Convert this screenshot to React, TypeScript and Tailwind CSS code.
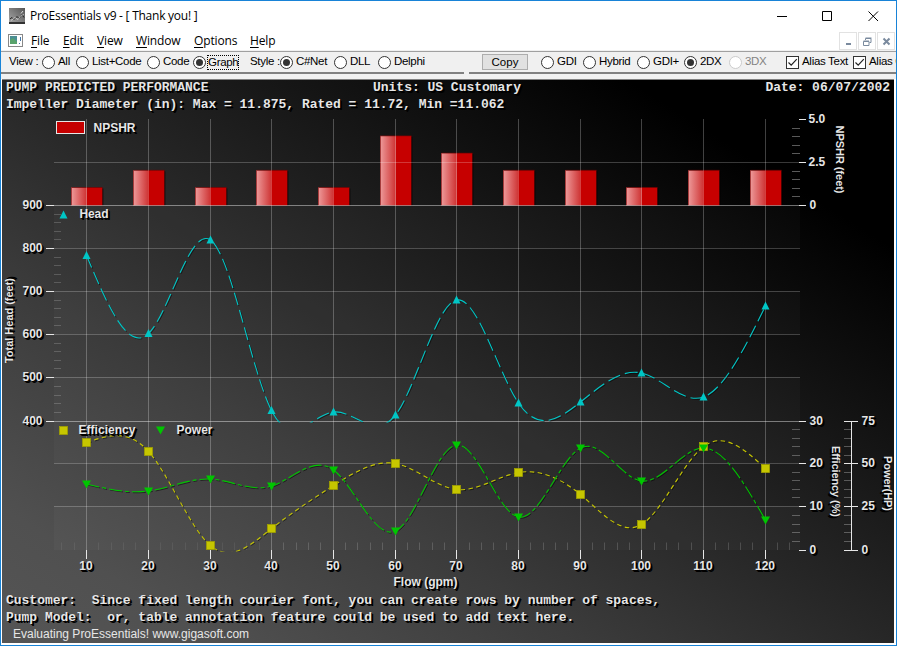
import { useState } from "react";

const columns = [86.5, 148.5, 210.5, 271.5, 333.5, 395.5, 456.5, 518.5, 580.5, 641.5, 703.5, 765.5];
const rows = [162.5, 205.5, 248.5, 291.5, 334.5, 377.5, 421.5, 463.5, 506.5];

const npshr = [1, 2, 1, 2, 1, 4, 3, 2, 2, 1, 2, 2];
const head = [255.5, 333.5, 240, 410.5, 412, 415, 300, 403, 402, 373, 397, 306];
const efficiency = [442.5, 451.5, 545.5, 528.5, 485.5, 463.5, 489.5, 472.5, 494.5, 524.5, 446.5, 468.5];
const power = [484, 491, 479, 486, 470, 531, 445, 517, 448, 481, 448, 520];

// Natural cubic spline through evenly spaced points, returned as bezier segments
function spline(ys: number[]) {
  const n = ys.length;
  const c = new Array(n).fill(0);
  const d = new Array(n).fill(0);
  for (let i = 1; i < n - 1; i++) {
    const rhs = 6 * (ys[i + 1] - 2 * ys[i] + ys[i - 1]);
    const m = 4 - c[i - 1];
    c[i] = 1 / m;
    d[i] = (rhs - d[i - 1]) / m;
  }
  const s = new Array(n).fill(0);
  for (let i = n - 2; i > 0; i--) s[i] = d[i] - c[i] * s[i + 1];

  let path = `M${columns[0]} ${ys[0]}`;
  for (let i = 0; i < n - 1; i++) {
    const step = columns[i + 1] - columns[i];
    const delta = ys[i + 1] - ys[i];
    const start = delta - (2 * s[i] + s[i + 1]) / 6;
    const end = delta + (s[i] + 2 * s[i + 1]) / 6;
    path += ` C${columns[i] + step / 3} ${ys[i] + start / 3} ${columns[i + 1] - step / 3} ${ys[i + 1] - end / 3} ${columns[i + 1]} ${ys[i + 1]}`;
  }
  return path;
}

// Tick positions between major divisions, four per interval
function minors(majors: number[]) {
  return majors.slice(1).flatMap((y, i) =>
    [1, 2, 3, 4].map((k) => Math.round(majors[i] + ((y - majors[i]) * k) / 5 - 0.5) + 0.5)
  );
}

function Up({ x, y }: { x: number; y: number }) {
  return <path d={`M${x} ${y - 4.5}L${x + 4} ${y + 3.5}H${x - 4}Z`} fill="#00c6c6" />;
}

function Down({ x, y }: { x: number; y: number }) {
  return <path d={`M${x} ${y + 4.5}L${x + 4.5} ${y - 3.5}H${x - 4.5}Z`} fill="#00c600" />;
}

function Square({ x, y }: { x: number; y: number }) {
  return <rect x={x - 4} y={y - 4} width="8" height="8" fill="#c6c600" stroke="#a0a000" strokeWidth="0.8" />;
}

function Curve({ ys, color, dash, clip }: { ys: number[]; color: string; dash: string; clip: string }) {
  const d = spline(ys);
  return (
    <g clipPath={`url(#${clip})`} fill="none" strokeDasharray={dash}>
      <path d={d} stroke="#000" strokeOpacity="0.5" transform="translate(1 1)" />
      <path d={d} stroke={color} strokeWidth="1.1" />
    </g>
  );
}

function Chart() {
  const headAxis = rows.slice(1, 7);
  const lowerAxis = [421.5, 463.5, 506.5, 550.5];
  const upperAxis = [119.5, 162.5, 205.5];
  const xMinors = Array.from({ length: 61 }, (_, i) => i - 2).filter((i) => i % 5 !== 0 && i < 58);

  return (
    <svg
      viewBox="2 112 892 482"
      className="block h-[482px] w-[892px] shrink-0 font-['Liberation_Sans',sans-serif] text-[12px] font-bold [&_text]:[text-shadow:1px_1px_0_#000,2px_2px_0_#000]"
    >
      <defs>
        <linearGradient id="bar">
          <stop offset="0" stopColor="#ee9c9c" />
          <stop offset="0.5" stopColor="#ce3434" />
          <stop offset="0.5" stopColor="#c60000" />
        </linearGradient>
        <clipPath id="upper">
          <rect x="54" y="205" width="746" height="217.5" />
        </clipPath>
        <clipPath id="lower">
          <rect x="54" y="421" width="746" height="130.5" />
        </clipPath>
      </defs>

      {/* Alternating bands */}
      <g fill="#fff" fillOpacity="0.025">
        <rect x="54" y="205" width="746" height="43" />
        <rect x="54" y="291" width="746" height="43" />
        <rect x="54" y="377" width="746" height="86" />
        <rect x="54" y="506" width="746" height="44" />
      </g>

      {/* Bars */}
      {npshr.map((v, i) => {
        const h = v * 17.2 + 0.8;
        return (
          <g key={i}>
            <rect x={columns[i] - 14} y={206.5 - h} width="31" height={h - 1} fill="#000" fillOpacity="0.5" />
            <rect x={columns[i] - 15.5} y={205.5 - h} width="31" height={h} fill="url(#bar)" />
            <path d={`M${columns[i] - 15} ${205.5}v${-h}h31v${h}`} fill="none" stroke="#700" strokeOpacity="0.6" />
          </g>
        );
      })}

      {/* Grid */}
      <g stroke="#fff" strokeOpacity="0.25">
        {columns.map((x) => (
          <path key={x} d={`M${x} 119V550`} />
        ))}
        {rows.map((y) => (
          <path key={y} d={`M54 ${y}H800`} strokeOpacity={y === 205.5 || y === 421.5 ? 0.42 : 0.22} />
        ))}
      </g>

      {/* Minor ticks */}
      <g stroke="#fff" strokeOpacity="0.18">
        {minors(headAxis).map((y) => (
          <path key={y} d={`M54 ${y}h7`} />
        ))}
        {minors(upperAxis).map((y) => (
          <path key={y} d={`M792 ${y}h8`} strokeOpacity="0.35" />
        ))}
        {minors(lowerAxis).map((y) => (
          <path key={y} d={`M792 ${y}h8M844 ${y}h7`} strokeOpacity="0.28" />
        ))}
        {xMinors.map((i) => (
          <path key={i} d={`M${Math.round(86 + i * 12.34) + 0.5} 542.5V550`} strokeOpacity={i < 15 ? 0.07 : 0.16} />
        ))}
      </g>

      {/* Major ticks */}
      <g stroke="#e6e6e6">
        {headAxis.map((y) => (
          <path key={y} d={`M46 ${y}h8`} />
        ))}
        {[...upperAxis, ...lowerAxis].map((y, i) => (
          <path key={i} d={`M799 ${y}h7`} />
        ))}
        {lowerAxis.map((y) => (
          <path key={y} d={`M844 ${y}h14`} />
        ))}
        {columns.map((x) => (
          <path key={x} d={`M${x} 550v9`} />
        ))}
        <path d="M851.5 421V551" />
      </g>

      {/* Series */}
      <Curve ys={head} color="#00c6c6" dash="13 5" clip="upper" />
      <Curve ys={efficiency} color="#c6c600" dash="4.5 3.5" clip="lower" />
      <Curve ys={power} color="#00c600" dash="13 3 4 3" clip="lower" />
      {head.map((y, i) => (
        <Up key={i} x={columns[i]} y={y} />
      ))}
      {efficiency.map((y, i) => (
        <Square key={i} x={columns[i]} y={y} />
      ))}
      {power.map((y, i) => (
        <Down key={i} x={columns[i]} y={y} />
      ))}

      {/* Legends */}
      <rect x="56.5" y="121.5" width="28" height="12" fill="#c60000" stroke="#e6e6e6" />
      <Up x={63.5} y={215} />
      <Square x={63.5} y={430.5} />
      <Down x={160.5} y={430} />
      <g fill="#e6e6e6">
        <text x="93.5" y="132" textLength="42">NPSHR</text>
        <text x="79.5" y="218" textLength="29">Head</text>
        <text x="78.5" y="434" textLength="57">Efficiency</text>
        <text x="176.5" y="434" textLength="36">Power</text>

        <g textAnchor="end">
          {headAxis.map((y, i) => (
            <text key={y} x="42.5" y={y + 3.5}>{900 - i * 100}</text>
          ))}
        </g>
        <text x="808.5" y="123">5.0</text>
        <text x="808.5" y="166">2.5</text>
        <text x="809.5" y="209">0</text>
        {lowerAxis.map((y, i) => (
          <g key={y}>
            <text x="809.5" y={y + 3.5}>{30 - i * 10}</text>
            <text x="861.5" y={y + 3.5}>{75 - i * 25}</text>
          </g>
        ))}
        <g textAnchor="middle">
          {columns.map((x, i) => (
            <text key={x} x={x - 0.5} y="570">{(i + 1) * 10}</text>
          ))}
          <text x="425.5" y="585.5">Flow (gpm)</text>
        </g>
        <g textAnchor="middle" className="text-[11px]">
          <text transform="translate(13 320.5) rotate(-90)" textLength="85">Total Head (feet)</text>
          <text transform="translate(835.5 159.5) rotate(90)" textLength="68">NPSHR (feet)</text>
          <text transform="translate(831.5 481.5) rotate(90)" textLength="71">Efficiency (%)</text>
          <text transform="translate(883.5 483.5) rotate(90)" textLength="55">Power(HP)</text>
        </g>
      </g>
    </svg>
  );
}

type RadioProps = {
  label: string;
  checked: boolean;
  onSelect: () => void;
  width: string;
  disabled?: boolean;
  focused?: boolean;
};

function Radio({ label, checked, onSelect, width, disabled, focused }: RadioProps) {
  return (
    <button
      onClick={onSelect}
      disabled={disabled}
      className={`flex h-full shrink-0 items-center gap-[3px] whitespace-nowrap ${width} ${disabled ? "text-[#838383]" : "text-black"}`}
    >
      <span
        className={`flex size-[13px] shrink-0 items-center justify-center rounded-full border bg-white ${disabled ? "border-[#ccc]" : "border-[#333]"}`}
      >
        {checked && <span className="size-[7px] rounded-full bg-[#333]" />}
      </span>
      <span className={focused ? "-ml-px outline-1 outline-dotted outline-black leading-[13px]" : ""}>{label}</span>
    </button>
  );
}

function Check({ label, checked, onToggle }: { label: string; checked: boolean; onToggle: () => void }) {
  return (
    <button onClick={onToggle} className="flex h-full w-[63px] shrink-0 items-center gap-[3px] whitespace-nowrap">
      <span className="flex size-[13px] shrink-0 items-center justify-center border border-[#333] bg-white">
        {checked && (
          <svg viewBox="0 0 11 11" className="size-[11px]" fill="none" stroke="#222" strokeWidth="1.2">
            <path d="M1.5 5.5L4.2 8.2L9.8 2.2" />
          </svg>
        )}
      </span>
      {label}
    </button>
  );
}

export default function App() {
  const [view, setView] = useState("Graph");
  const [style, setStyle] = useState("C#Net");
  const [render, setRender] = useState("2DX");
  const [aliasText, setAliasText] = useState(true);
  const [aliasGraph, setAliasGraph] = useState(true);

  const views = [
    { label: "All", width: "w-[34px]" },
    { label: "List+Code", width: "w-[71px]" },
    { label: "Code", width: "w-[46px]" },
    { label: "Graph", width: "w-[57px]" },
  ];
  const styles = [
    { label: "C#Net", width: "w-[54px]" },
    { label: "DLL", width: "w-[44px]" },
    { label: "Delphi", width: "w-[104px]" },
  ];
  const renderers = [
    { label: "GDI", width: "w-[42px]" },
    { label: "Hybrid", width: "w-[54px]" },
    { label: "GDI+", width: "w-[47px]" },
    { label: "2DX", width: "w-[45px]" },
    { label: "3DX", width: "w-[57px]", disabled: true },
  ];
  const menus = [
    { label: "File", width: "w-[32px]" },
    { label: "Edit", width: "w-[34px]" },
    { label: "View", width: "w-[39px]" },
    { label: "Window", width: "w-[58px]" },
    { label: "Options", width: "w-[56px]" },
    { label: "Help", width: "w-[40px]" },
  ];

  return (
    <div className="flex h-[646px] w-[897px] flex-col overflow-hidden border border-[#1883d7] bg-white text-black">
      {/* Title bar */}
      <header className="flex h-[29px] shrink-0 items-center pl-[8px] font-['Open_Sans',sans-serif] text-[12px]">
        <svg viewBox="0 0 16 16" className="size-[16px]">
          <defs>
            <linearGradient id="app" x1="0" y1="1" x2="1" y2="0">
              <stop offset="0" stopColor="#aaa" />
              <stop offset="1" stopColor="#555" />
            </linearGradient>
          </defs>
          <rect width="16" height="16" fill="url(#app)" />
          <path d="M0 14h16v2H0z" fill="#333" />
          <path d="M1 11l2-1.5 2 2 3-3 2 2 3-4 2 3" fill="none" stroke="#222" />
          <path d="M2 12.5l4-3 3 2 3-4 3-1" fill="none" stroke="#ddd" strokeWidth="0.7" />
          <path d="M12 5.5l2-2.5" stroke="#ddd" />
        </svg>
        <h1 className="ml-[5px] w-[200px] whitespace-nowrap tracking-[-0.25px]">ProEssentials v9 - [ Thank you! ]</h1>
        <div className="ml-auto flex pr-[17px]">
          <svg viewBox="0 0 102 12" className="h-[12px] w-[102px]" fill="none" stroke="#000">
            <path d="M0 6.5h10M45.5 1.5h9v9h-9zM91.5 1.5l9.5 9.5M101 1.5l-9.5 9.5" />
          </svg>
        </div>
      </header>

      {/* Menu bar */}
      <nav className="flex h-[20px] shrink-0 items-center pl-[7px] pt-[2px] font-['Open_Sans',sans-serif] text-[12px]">
        <svg viewBox="0 0 15 13" className="mb-[2px] mr-[8px] h-[13px] w-[15px]">
          <rect x="0.5" y="0.5" width="14" height="12" fill="#fff" stroke="#888" />
          <rect x="2" y="2" width="7" height="8" fill="#4b8f93" />
          <path d="M2 6l3-2 4 4v2H2z" fill="#59a36c" />
          <path d="M12.5 3v4M11 9.5h1" stroke="#4577a8" />
        </svg>
        {menus.map((m) => (
          <button key={m.label} className={`shrink-0 whitespace-nowrap text-left tracking-[-0.15px] ${m.width}`}>
            <span className="underline underline-offset-2">{m.label[0]}</span>
            {m.label.slice(1)}
          </button>
        ))}
        <div className="ml-auto flex gap-px pr-px">
          <span className="flex size-[18px] items-center justify-center border border-[#e2e2e2]">
            <svg viewBox="0 0 9 9" className="size-[9px]">
              <path d="M2 6h5v2H2z" fill="#7a8a9e" />
            </svg>
          </span>
          <span className="flex size-[18px] items-center justify-center border border-[#e2e2e2]">
            <svg viewBox="0 0 9 9" className="size-[9px]" fill="none" stroke="#7a8a9e">
              <path d="M2.5 3V1.5h5.5v4H6.5M2.5 1h6M0.5 4.5h5.5v4H0.5zM0.5 4h5.5" />
            </svg>
          </span>
          <span className="flex size-[18px] items-center justify-center border border-[#e2e2e2]">
            <svg viewBox="0 0 9 9" className="size-[9px]" fill="none" stroke="#7a8a9e" strokeWidth="2">
              <path d="M1.5 1.5l6 6M7.5 1.5l-6 6" />
            </svg>
          </span>
        </div>
      </nav>

      {/* Toolbar */}
      <div className="flex h-[29px] shrink-0 flex-col bg-[#f0f0f0] font-['Liberation_Sans',sans-serif] text-[11.5px]">
        <div className="mt-px h-px shrink-0 bg-[#a0a0a0]" />
        <div className="flex h-[22px] shrink-0 justify-between">
          <div className="flex w-[463px] items-center overflow-hidden border-b-2 border-[#808080] pl-[8px] tracking-[-0.3px]">
            <span className="w-[33px] shrink-0 whitespace-nowrap">View :</span>
            {views.map((v) => (
              <Radio
                key={v.label}
                {...v}
                checked={view === v.label}
                focused={view === v.label}
                onSelect={() => setView(v.label)}
              />
            ))}
            <span className="w-[30px] shrink-0 whitespace-nowrap">Style :</span>
            {styles.map((s) => (
              <Radio key={s.label} {...s} checked={style === s.label} onSelect={() => setStyle(s.label)} />
            ))}
          </div>
          <div className="flex w-[427px] items-center overflow-hidden border-b-2 border-[#808080] pl-[13px] tracking-[-0.3px]">
            <button className="mr-[13px] h-[16px] w-[46px] shrink-0 border border-[#adadad] bg-[#e1e1e1] leading-[15px] tracking-normal">
              Copy
            </button>
            {renderers.map((r) => (
              <Radio key={r.label} {...r} checked={render === r.label} onSelect={() => setRender(r.label)} />
            ))}
            <div className="flex gap-[4px]">
              <Check label="Alias Text" checked={aliasText} onToggle={() => setAliasText(!aliasText)} />
              <Check label="Alias Graph" checked={aliasGraph} onToggle={() => setAliasGraph(!aliasGraph)} />
            </div>
          </div>
        </div>
      </div>

      {/* Graph */}
      <main className="ml-px flex h-[564px] w-[892px] shrink-0 flex-col overflow-hidden bg-[linear-gradient(to_top_right,#555_0%,#505050_12%,#3b3b3b_33%,#272727_50%,#000_85%)] text-[#e6e6e6]">
        <div className="flex h-[33px] shrink-0 flex-col border-t border-[#808080] px-[4px] font-['Liberation_Mono',monospace] text-[13px] font-bold leading-[17px] tracking-[-0.015px] [text-shadow:1px_1px_0_#000,2px_2px_0_#000]">
          <div className="-mt-px flex justify-between whitespace-pre">
            <span className="w-[367px]">PUMP PREDICTED PERFORMANCE</span>
            <span className="flex-1">Units: US Customary</span>
            <span>Date: 06/07/2002</span>
          </div>
          <p className="whitespace-pre">Impeller Diameter (in): Max = 11.875, Rated = 11.72, Min =11.062</p>
        </div>
        <Chart />
        <footer className="pl-[4px] font-['Liberation_Mono',monospace] text-[13px] font-bold leading-[17px] tracking-[-0.015px] [text-shadow:1px_1px_0_#000,2px_2px_0_#000]">
          <p className="-mt-[2px] whitespace-pre">Customer:  Since fixed length courier font, you can create rows by number of spaces,</p>
          <p className="whitespace-pre">Pump Model:  or, table annotation feature could be used to add text here.</p>
          <p className="pl-[7px] font-['Liberation_Sans',sans-serif] text-[12px] font-normal leading-[16px] tracking-normal [text-shadow:none]">
            Evaluating ProEssentials! www.gigasoft.com
          </p>
        </footer>
      </main>
    </div>
  );
}
